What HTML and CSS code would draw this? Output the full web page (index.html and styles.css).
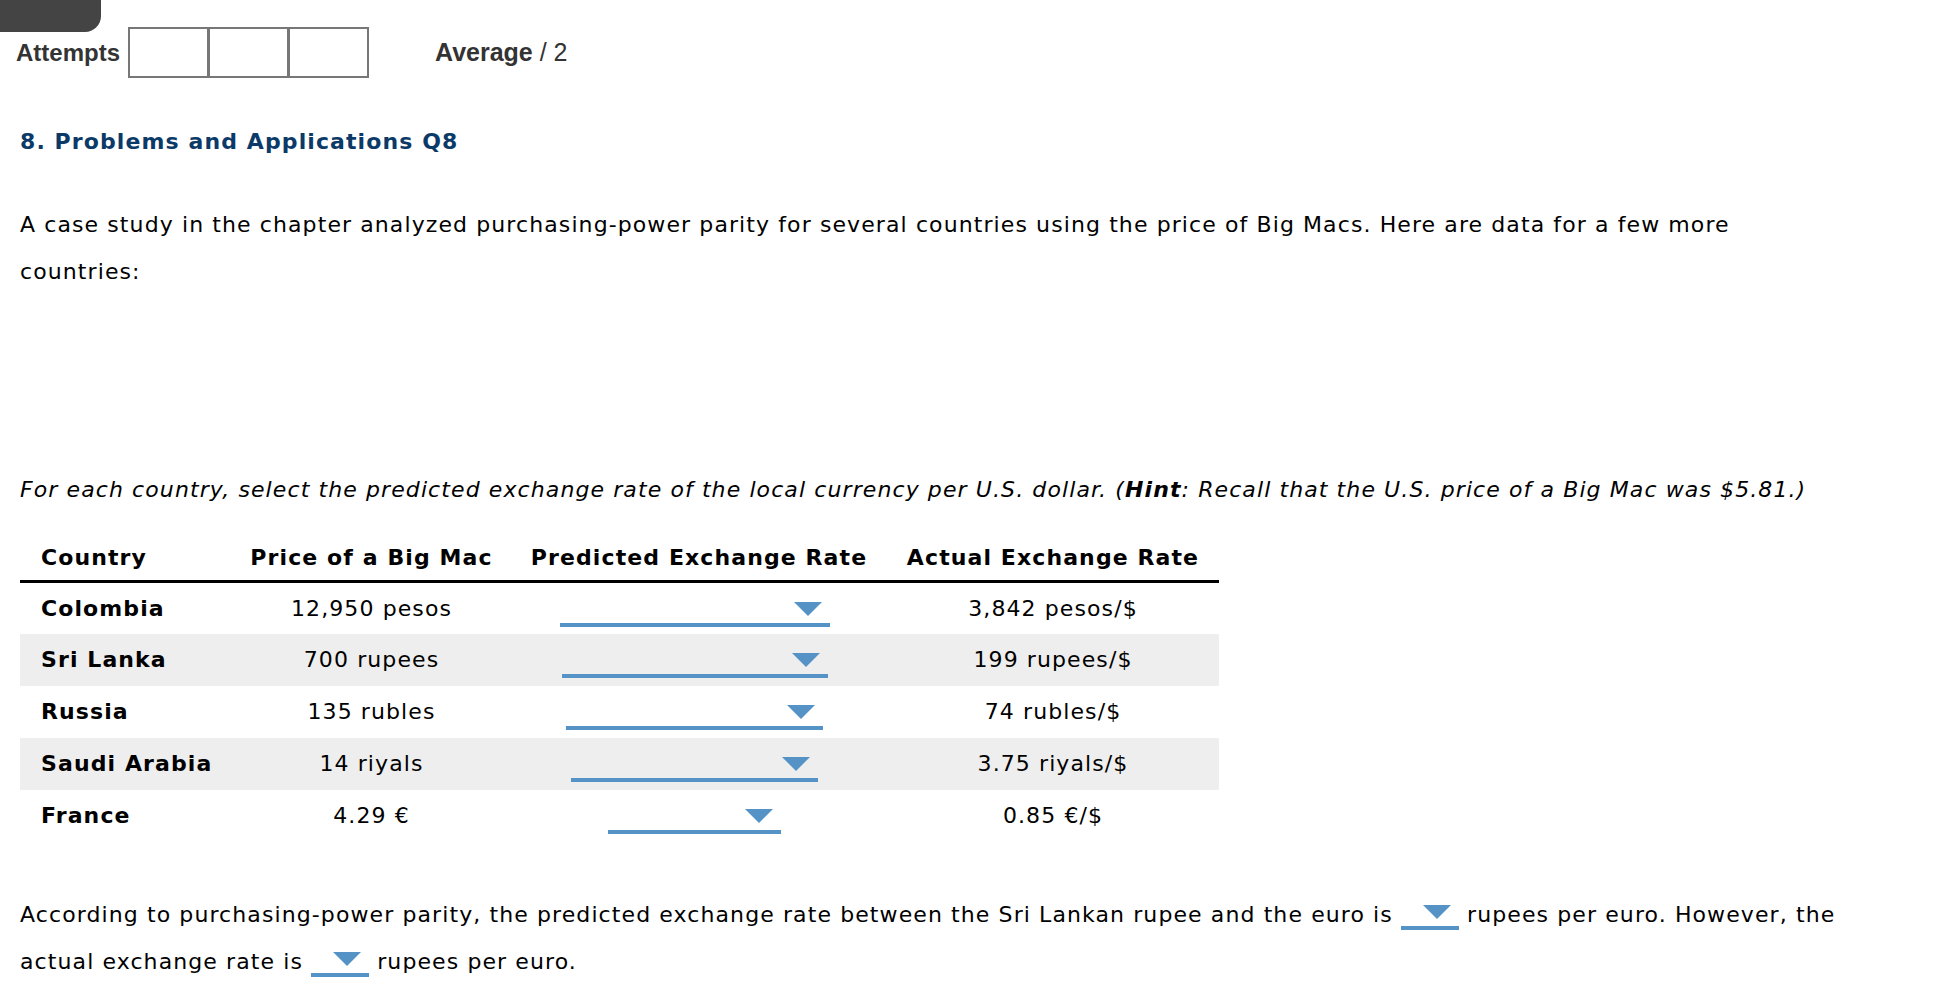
FILE: index.html
```html
<!DOCTYPE html>
<html lang="en">
<head>
<meta charset="utf-8">
<title>Problems and Applications Q8</title>
<link rel="stylesheet" href="styles.css">
</head>
<body>
<div class="tab"></div>
<div class="attempts-bar">
  <span class="attempts-label">Attempts</span>
  <div class="attempt-boxes">
    <span class="attempt-box"></span><span class="attempt-box"></span><span class="attempt-box"></span>
  </div>
  <span class="average"><b>Average</b> / 2</span>
</div>

<main class="question">
  <h2 class="q-title">8. Problems and Applications Q8</h2>
  <p class="text">A case study in the chapter analyzed purchasing-power parity for several countries using the price of Big Macs. Here are data for a few more countries:</p>
  <div class="spacer"></div>
  <p class="text instr"><i>For each country, select the predicted exchange rate of the local currency per U.S. dollar. (<b>Hint</b>: Recall that the U.S. price of a Big Mac was $5.81.)</i></p>

  <table class="data">
    <colgroup>
      <col class="c1"><col class="c2"><col class="c3"><col class="c4">
    </colgroup>
    <thead>
      <tr><th class="left">Country</th><th>Price of a Big Mac</th><th>Predicted Exchange Rate</th><th>Actual Exchange Rate</th></tr>
    </thead>
    <tbody>
      <tr><td class="left">Colombia</td><td>12,950 pesos</td><td class="pick"><span class="dd dd-w1"><span class="arrow"></span></span></td><td>3,842 pesos/$</td></tr>
      <tr class="alt"><td class="left">Sri Lanka</td><td>700 rupees</td><td class="pick"><span class="dd dd-w2"><span class="arrow"></span></span></td><td>199 rupees/$</td></tr>
      <tr><td class="left">Russia</td><td>135 rubles</td><td class="pick"><span class="dd dd-w3"><span class="arrow"></span></span></td><td>74 rubles/$</td></tr>
      <tr class="alt"><td class="left">Saudi Arabia</td><td>14 riyals</td><td class="pick"><span class="dd dd-w4"><span class="arrow"></span></span></td><td>3.75 riyals/$</td></tr>
      <tr><td class="left">France</td><td>4.29 €</td><td class="pick"><span class="dd dd-w5"><span class="arrow"></span></span></td><td>0.85 €/$</td></tr>
    </tbody>
  </table>

  <p class="text final">According to purchasing-power parity, the predicted exchange rate between the Sri Lankan rupee and the euro is <span class="dd dd-inline"><span class="arrow"></span></span> rupees per euro. However, the actual exchange rate is <span class="dd dd-inline"><span class="arrow"></span></span> rupees per euro.</p>
</main>
</body>
</html>
```

FILE: styles.css
```css
html, body {
  margin: 0;
  padding: 0;
  background: #fff;
}
body {
  font-family: Verdana, "DejaVu Sans", sans-serif;
  color: #000;
  position: relative;
}
.tab {
  position: absolute;
  left: 0;
  top: 0;
  width: 101px;
  height: 32px;
  background: #444;
  border-bottom-right-radius: 16px;
}
.attempts-bar {
  display: flex;
  align-items: center;
  padding: 27px 0 0 16px;
  font-family: "Liberation Sans", Arial, sans-serif;
  font-size: 24px;
  color: #333;
}
.attempts-label {
  font-weight: bold;
  margin-right: 8px;
}
.attempt-boxes {
  display: flex;
}
.attempt-box {
  width: 77px;
  height: 47px;
  border: 2px solid #777;
  margin-right: -1px;
}
.average {
  margin-left: 67px;
  font-size: 25px;
  color: #333;
}
.question {
  padding: 0 0 0 20px;
  width: 1825px;
  font-size: 22px;
  letter-spacing: 1.1px;
}
.q-title {
  margin: 49px 0 0 0;
  font-size: 22px;
  line-height: 30px;
  color: #0b3a68;
  font-weight: bold;
}
.text {
  font-size: 22px;
  line-height: 47px;
  margin: 44px 0 0 0;
}
.spacer {
  height: 171px;
}
.instr {
  margin-top: 0;
}
.data {
  border-collapse: collapse;
  margin-top: 22px;
  font-size: 22px;
}
.c1 { width: 212px; }
.c2 { width: 279px; }
.c3 { width: 376px; }
.c4 { width: 332px; }
.data th {
  height: 45px;
  padding: 0 16px;
  font-weight: bold;
  text-align: center;
  border-bottom: 3px solid #000;
  white-space: nowrap;
}
.data tbody tr {
  height: 52px;
}
.data td {
  padding: 0 16px;
  text-align: center;
  white-space: nowrap;
}
.data .left {
  text-align: left;
  padding-left: 21px;
}
.data td.left {
  font-weight: bold;
}
.data tr.alt td {
  background: #eee;
}
.data td.pick {
  vertical-align: top;
  padding-top: 19px;
  padding-bottom: 0;
  line-height: 0;
}
.dd {
  display: inline-flex;
  justify-content: flex-end;
  align-items: flex-start;
  box-sizing: border-box;
  height: 25px;
  border-bottom: 4px solid #5592c6;
  padding-right: 8px;
  vertical-align: top;
  letter-spacing: 0;
}
.data .dd {
  margin-right: 9px;
}
.arrow {
  width: 0;
  height: 0;
  border-left: 14px solid transparent;
  border-right: 14px solid transparent;
  border-top: 14px solid #5592c6;
}
.dd-w1 { width: 270px; }
.dd-w2 { width: 266px; }
.dd-w3 { width: 257px; }
.dd-w4 { width: 247px; }
.dd-w5 { width: 173px; }
.dd-inline {
  width: 58px;
  justify-content: flex-start;
  padding-left: 22px;
  padding-right: 0;
  vertical-align: 3px;
}
.final {
  margin-top: 49px;
}
```
